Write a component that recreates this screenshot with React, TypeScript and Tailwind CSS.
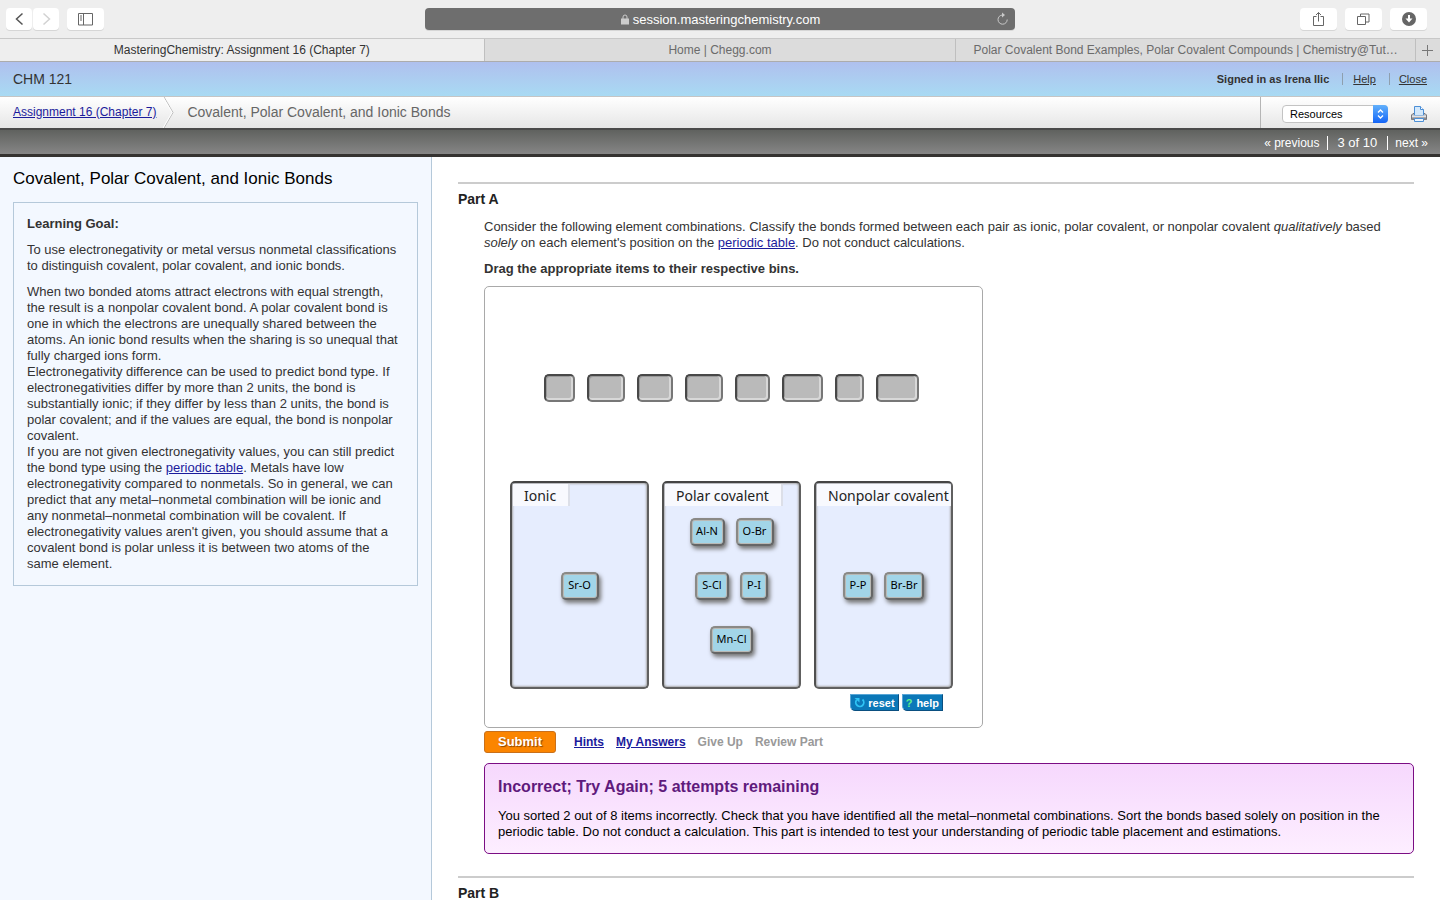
import type { ReactNode } from "react";

interface Chip {
  label: string;
  width: number;
}

interface Bin {
  title: string;
  rows: Chip[][];
}

const SLOT_WIDTHS = [31, 38, 36, 38, 35, 41, 29, 43];

const BINS: Bin[] = [
  { title: "Ionic", rows: [[{ label: "Sr-O", width: 38 }]] },
  {
    title: "Polar covalent",
    rows: [
      [{ label: "Al-N", width: 35 }, { label: "O-Br", width: 38 }],
      [{ label: "S-Cl", width: 34 }, { label: "P-I", width: 28 }],
      [{ label: "Mn-Cl", width: 43 }],
    ],
  },
  { title: "Nonpolar covalent", rows: [[{ label: "P-P", width: 30 }, { label: "Br-Br", width: 40 }]] },
];

function ToolButton({ label, className, children }: { label: string; className: string; children: ReactNode }) {
  return (
    <button aria-label={label} className={`flex h-[22px] items-center justify-center rounded bg-white shadow-[0_1px_0_#d6d6d6] ${className}`}>
      {children}
    </button>
  );
}

function BrowserBar() {
  return (
    <div className="grid h-[39px] shrink-0 grid-cols-[1fr_41%_1fr] items-center border-b border-[#c8c8c8] bg-[#eeeeee]">
      <div className="flex items-center pl-1.5">
        <ToolButton label="Back" className="w-[26px]">
          <svg width="9" height="14" viewBox="0 0 9 14" fill="none" stroke="#555" strokeWidth="1.500"><path d="M7.500 1.500 1.500 7l6 5.500" /></svg>
        </ToolButton>
        <ToolButton label="Forward" className="ml-px w-[26px]">
          <svg width="9" height="14" viewBox="0 0 9 14" fill="none" stroke="#d2d2d2" strokeWidth="1.500"><path d="M1.500 1.500 7.500 7l-6 5.500" /></svg>
        </ToolButton>
        <ToolButton label="Show sidebar" className="ml-2 w-[37px]">
          <svg width="16" height="13" viewBox="0 0 16 13" fill="none" stroke="#666">
            <path d="M.5 .5h14v11.500h-14zM5.500 .5V12" />
            <path d="M2 3h2M2 5h2M2 7h2" />
          </svg>
        </ToolButton>
      </div>
      <div className="flex h-[22px] items-center rounded bg-[#6e6e6e] pr-1.5 shadow-[0_1px_0_#d6d6d6]">
        <span className="w-5" />
        <div className="flex flex-1 items-center justify-center gap-1 pt-px text-[13px] text-white">
          <svg width="8" height="11" viewBox="0 0 8 11"><path d="M2 5V3a2 2 0 0 1 4 0v2" fill="none" stroke="#ccc" /><path d="M0 4.500h8V10.500H0z" fill="#ccc" /></svg>
          <span>session.masteringchemistry.com</span>
        </div>
        <button aria-label="Reload">
          <svg width="13" height="14" viewBox="0 0 13 14" fill="none" stroke="#c9c9c9"><path d="M6.500 3A4.600 4.600 0 1 0 11.200 7.500" /><path d="M6 .5 9 3 6 5.500z" fill="#c9c9c9" stroke="none" /></svg>
        </button>
      </div>
      <div className="flex items-center justify-end gap-2 pr-[13px]">
        <ToolButton label="Share" className="w-[37px]">
          <svg width="13" height="16" viewBox="0 0 13 16" fill="none" stroke="#666"><path d="M4.500 5.500h-3v9h10v-9h-3M6.500 10.500V1.500M4 4l2.500-2.500L9 4" /></svg>
        </ToolButton>
        <ToolButton label="Show all tabs" className="w-[37px]">
          <svg width="13" height="13" viewBox="0 0 13 13" fill="none" stroke="#666"><path d="M.5 3.500h8v8h-8z" /><path d="M3.500 3.500v-2.500h8.500v8H8.500" /></svg>
        </ToolButton>
        <ToolButton label="Downloads" className="w-[37px]">
          <svg width="14" height="14" viewBox="0 0 14 14"><circle cx="7" cy="7" r="7" fill="#666" /><path d="M7 3v4" fill="none" stroke="#fff" strokeWidth="2" /><path d="M3.500 6.500h7L7 10.500z" fill="#fff" /></svg>
        </ToolButton>
      </div>
    </div>
  );
}

function TabStrip() {
  return (
    <div className="grid h-[23px] shrink-0 grid-cols-[485fr_472fr_460fr_24px] border-b border-[#acacac] bg-[#dcdcdc] text-[12px] text-[#6b6b6b]">
      <button className="truncate border-r border-[#bfbfbf] bg-[#eeeeee] px-3 text-[#333]">MasteringChemistry: Assignment 16 (Chapter 7)</button>
      <button className="truncate border-r border-[#bfbfbf] px-3">Home | Chegg.com</button>
      <button className="truncate border-r border-[#bfbfbf] px-3">Polar Covalent Bond Examples, Polar Covalent Compounds | Chemistry@Tut…</button>
      <button aria-label="New tab" className="flex items-center justify-center">
        <svg width="11" height="11" viewBox="0 0 11 11" stroke="#777"><path d="M5.500 0v11M0 5.500h11" /></svg>
      </button>
    </div>
  );
}

function SiteHeader() {
  return (
    <header className="shrink-0 text-[#333]">
      <div className="flex h-[35px] items-center justify-between border-b border-[#c5c5c5] bg-linear-to-b from-[#afc0ee] to-[#a8daf3] px-[13px]">
        <span className="text-[14px]">CHM 121</span>
        <div className="flex items-center text-[11px]">
          <b>Signed in as Irena Ilic</b>
          <a href="#help" className="ml-[13px] border-l border-[#8e9fae] pl-2.5 leading-3 underline">Help</a>
          <a href="#close" className="ml-[13px] border-l border-[#8e9fae] pl-[9px] leading-3 underline">Close</a>
        </div>
      </div>
      <div className="flex h-[31px] items-center bg-linear-to-b from-white to-[#e6e6e6] pl-[13px]">
        <a href="#assignment" className="pb-0.5 text-[12px] text-[#1b1b9c] underline">Assignment 16 (Chapter 7)</a>
        <svg className="ml-[7px]" width="12" height="31" viewBox="0 0 12 31" fill="none"><path d="M1 0l9 15.500L1 31" stroke="#bbb" /><path d="M0 0l9 15.500L0 31" stroke="#fff" /></svg>
        <span className="ml-3 flex-1 pb-0.5 text-[14px] text-[#666]">Covalent, Polar Covalent, and Ionic Bonds</span>
        <div className="flex h-full items-center border-l border-[#b5b5b5] pt-[3px] pr-[13px] pl-[21px]">
          <div className="relative">
            <select aria-label="Resources" className="h-[18px] w-[106px] appearance-none rounded border border-[#c3c3c3] bg-white pl-[7px] text-[11px] leading-4 text-black">
              <option>Resources</option>
            </select>
            <span className="pointer-events-none absolute top-0 right-0 flex h-[18px] w-[15px] items-center justify-center rounded-r bg-linear-to-b from-[#62b0fb] to-[#1463f6]">
              <svg width="7" height="10" viewBox="0 0 7 10" fill="none" stroke="#fff" strokeWidth="1.300"><path d="M1 3.500 3.500 1 6 3.500M1 6.500 3.500 9 6 6.500" /></svg>
            </span>
          </div>
          <button aria-label="Print" className="ml-[23px]">
            <svg width="16" height="17" viewBox="0 0 16 17">
              <path d="M2 7.500h12l1.500 1.500v4.500H.5V9z" fill="#b4b4b8" stroke="#77777c" />
              <path d="M3.500 .5h6l3 3v6h-9z" fill="#d3e8fb" stroke="#4c8fd6" />
              <path d="M9.500 .5v3h3" fill="#fff" stroke="#4c8fd6" />
              <path d="M1 9.500h14v2H1z" fill="#e2e2e4" />
              <path d="M1 11.500h14v2H1z" fill="#8b8b90" />
              <path d="M3.500 12.500h9v3h-9z" fill="#eef5fc" stroke="#4c8fd6" />
            </svg>
          </button>
        </div>
      </div>
      <nav className="flex h-[29px] items-center justify-end border-t-2 border-b-3 border-t-[#4a4a4a] border-b-[#343230] bg-linear-to-b from-[#60625f] to-[#868686] pt-0.5 pr-3 text-[12px] leading-[14px] text-white">
        <a href="#previous" className="border-r border-white pr-[7px]">« previous</a>
        <span className="border-r border-white px-2.5 text-[13px]">3 of 10</span>
        <a href="#next" className="pl-[7px]">next »</a>
      </nav>
    </header>
  );
}

function Sidebar() {
  return (
    <aside className="w-[30%] shrink-0 border-r border-[#b5c9da] bg-[#f3f8ff] px-[13px] pt-3">
      <h1 className="text-[17px] leading-5 text-black">Covalent, Polar Covalent, and Ionic Bonds</h1>
      <div className="mt-[13px] border border-[#b5c9da] p-[13px]">
        <h2 className="font-bold">Learning Goal:</h2>
        <p className="mt-2.5">To use electronegativity or metal versus nonmetal classifications to distinguish covalent, polar covalent, and ionic bonds.</p>
        <p className="mt-2.5">
          When two bonded atoms attract electrons with equal strength, the result is a nonpolar covalent bond. A polar covalent bond is one in
          which the electrons are unequally shared between the atoms. An ionic bond results when the sharing is so unequal that fully charged
          ions form.
        </p>
        <p>
          Electronegativity difference can be used to predict bond type. If electronegativities differ by more than 2 units, the bond is
          substantially ionic; if they differ by less than 2 units, the bond is polar covalent; and if the values are equal, the bond is
          nonpolar covalent.
        </p>
        <p>
          If you are not given electronegativity values, you can still predict the bond type using the{" "}
          <a href="#table" className="text-[#1b1b9c] underline">periodic table</a>. Metals have low electronegativity compared to nonmetals.
          So in general, we can predict that any metal–nonmetal combination will be ionic and any nonmetal–nonmetal combination will be
          covalent. If electronegativity values aren't given, you should assume that a covalent bond is polar unless it is between two atoms
          of the same element.
        </p>
      </div>
    </aside>
  );
}

function BinBox({ bin }: { bin: Bin }) {
  return (
    <section className="flex h-[208px] w-[139px] flex-col overflow-hidden rounded-[5px] border-2 border-[#606060] border-t-[#444] border-l-[#505050] bg-[#e6edfe] font-['Noto_Sans','DejaVu_Sans',sans-serif] text-[#222] shadow-[inset_0_0_2px_1px_#aaa]">
      <h3 className="m-px h-[22px] self-start border-r-2 border-[#dcdfe8] bg-[#f8f9fe] pr-3 pl-[11px] text-[14px] leading-6 whitespace-nowrap">{bin.title}</h3>
      <div className="flex flex-1 flex-col items-center justify-center gap-[26px] pb-[22px]">
        {bin.rows.map((row, i) => (
          <div key={i} className="flex gap-[11px]">
            {row.map((chip) => (
              <button
                key={chip.label}
                style={{ width: chip.width }}
                className="h-7 rounded-[5px] border-2 border-[#8a8986] border-r-[#666] border-b-[#666] bg-[#a2d5e8] pb-0.5 text-center text-[11px] leading-[22px] whitespace-nowrap text-black shadow-[inset_0_0_0_1px_#b9b9b5,2px_3px_4px_#777]"
              >
                {chip.label}
              </button>
            ))}
          </div>
        ))}
      </div>
    </section>
  );
}

function SortingBoard() {
  return (
    <div className="mt-[9px] flex w-[499px] flex-col items-center rounded-[5px] border border-[#a9a9a9] pt-[87px] pr-[29px] pb-4 pl-[25px]">
      <div className="flex gap-3">
        {SLOT_WIDTHS.map((width, i) => (
          <div key={i} style={{ width }} className="h-7 rounded-[5px] border-2 border-[#777] border-t-[#484848] border-l-[#484848] bg-[#bababa] shadow-[inset_-1px_-1px_0_1px_#d8d8d8,inset_1px_1px_0_#999]" />
        ))}
      </div>
      <div className="mt-[79px] flex gap-[13px]">
        {BINS.map((bin) => (
          <BinBox key={bin.title} bin={bin} />
        ))}
      </div>
      <div className="mt-[5px] mr-2.5 flex gap-[3px] self-end text-[11px] leading-4 font-bold text-white">
        <button className="flex h-[17px] items-center gap-[3px] rounded-bl-[5px] border border-t-[#58a6d6] border-r-[#0a4f80] border-b-[#0a4f80] border-l-[#58a6d6] bg-[#0b78b8] px-[3px]">
          <svg width="11" height="11" viewBox="0 0 11 11" fill="none" stroke="#2fc4f5" strokeWidth="1.800"><path d="M8.500 2.500A4 4 0 1 1 2.600 3" /><path d="M.5 1h5v4.500z" fill="#2fc4f5" stroke="none" /></svg>
          reset
        </button>
        <button className="flex h-[17px] items-center gap-1 rounded-bl-[5px] border border-t-[#58a6d6] border-r-[#0a4f80] border-b-[#0a4f80] border-l-[#58a6d6] bg-[#0b78b8] px-[3px]">
          <span className="text-[#5ef08c]">?</span>
          help
        </button>
      </div>
    </div>
  );
}

function PartHeading({ children }: { children: ReactNode }) {
  return <h2 className="border-t-2 border-[#ccc] pt-[7px] text-[14px] font-bold text-[#222]">{children}</h2>;
}

export default function App() {
  return (
    <div className="flex h-screen flex-col bg-white font-['Liberation_Sans',Arial,sans-serif] text-[13px] leading-4 text-[#333]">
      <BrowserBar />
      <TabStrip />
      <SiteHeader />
      <div className="flex min-h-0 flex-1">
        <Sidebar />
        <main className="min-w-0 flex-1 overflow-y-auto px-[26px] pt-[25px] [scrollbar-width:none]">
          <PartHeading>Part A</PartHeading>
          <div className="mt-3 mb-[22px] pl-[26px]">
            <p>
              Consider the following element combinations. Classify the bonds formed between each pair as ionic, polar covalent, or nonpolar
              covalent <i>qualitatively</i> based <i>solely</i> on each element's position on the{" "}
              <a href="#table" className="text-[#1b1b9c] underline">periodic table</a>. Do not conduct calculations.
            </p>
            <p className="mt-2.5 font-bold">Drag the appropriate items to their respective bins.</p>
            <SortingBoard />
            <div className="mt-[3px] flex items-center gap-3 text-[12px] font-bold">
              <button className="mr-1.5 h-[22px] w-[72px] rounded-[3px] border border-[#c9701a] bg-[#fb8500] text-[13px] text-white [text-shadow:1px_1px_1px_#8a4500]">Submit</button>
              <a href="#hints" className="text-[#1b1b9c] underline">Hints</a>
              <a href="#answers" className="text-[#1b1b9c] underline">My Answers</a>
              <span className="text-[#999]">Give Up</span>
              <span className="text-[#999]">Review Part</span>
            </div>
            <div role="alert" className="mt-2.5 rounded-[5px] border border-[#7b0d84] bg-linear-to-b from-[#f6d8fd] to-[#fdeeff] p-[13px] text-black">
              <h3 className="text-[16px] leading-5 font-bold text-[#5f1a7c]">Incorrect; Try Again; 5 attempts remaining</h3>
              <p className="mt-[11px]">
                You sorted 2 out of 8 items incorrectly. Check that you have identified all the metal–nonmetal combinations. Sort the bonds
                based solely on position in the periodic table. Do not conduct a calculation. This part is intended to test your
                understanding of periodic table placement and estimations.
              </p>
            </div>
          </div>
          <PartHeading>Part B</PartHeading>
        </main>
      </div>
    </div>
  );
}
